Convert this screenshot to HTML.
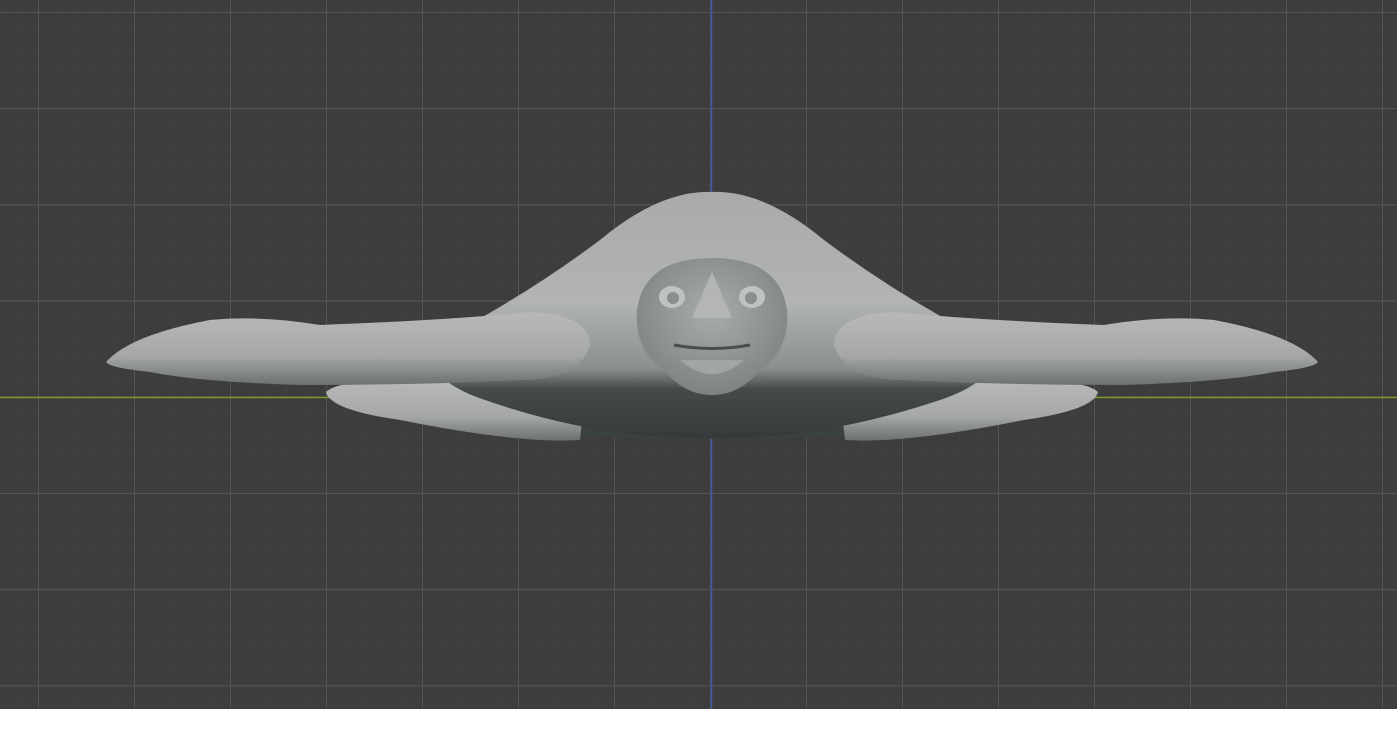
<!DOCTYPE html><html><head><style>html,body{margin:0;padding:0;background:#fff;width:1397px;height:738px;overflow:hidden}</style></head><body>
<svg width="1397" height="738" viewBox="0 0 1397 738" xmlns="http://www.w3.org/2000/svg">
<defs>
<pattern id="minor" x="38" y="12" width="19.2" height="19.2" patternUnits="userSpaceOnUse"><path d="M0 0H19.2M0 0V19.2" stroke="#444" stroke-width="1" fill="none"/></pattern>
<pattern id="major" x="38" y="12" width="96" height="96.2" patternUnits="userSpaceOnUse"><path d="M0 0.5H96M0.5 0V96" stroke="#555" stroke-width="1" fill="none"/></pattern>
<linearGradient id="shell" x1="0" y1="0" x2="0" y2="1"><stop offset="0" stop-color="#a9abab"/><stop offset="0.45" stop-color="#b2b4b4"/><stop offset="0.72" stop-color="#8a8e8e"/><stop offset="0.8" stop-color="#454a4a"/><stop offset="1" stop-color="#353a3a"/></linearGradient>
<linearGradient id="fl" x1="0" y1="0" x2="0" y2="1"><stop offset="0" stop-color="#b8baba"/><stop offset="0.6" stop-color="#a6a8a8"/><stop offset="1" stop-color="#6c7070"/></linearGradient>
<radialGradient id="head" cx="0.5" cy="0.4" r="0.6"><stop offset="0" stop-color="#a9acac"/><stop offset="1" stop-color="#7e8282"/></radialGradient>
</defs>
<rect width="1397" height="709" fill="#3d3d3d"/>
<rect width="1397" height="709" fill="url(#minor)"/>
<rect width="1397" height="709" fill="url(#major)"/>
<line x1="0" y1="397.5" x2="1397" y2="397.5" stroke="#7d9a2b" stroke-width="1.5"/>
<line x1="711.5" y1="0" x2="711.5" y2="709" stroke="#3c5aa6" stroke-width="1.5"/>
<ellipse cx="712" cy="405" rx="290" ry="34" fill="#3b4040"/>
<path d="M326 392 Q340 378 430 380 L585 395 L580 440 Q520 444 400 420 Q330 410 326 392Z" fill="url(#fl)"/>
<path d="M1098 392 Q1084 378 994 380 L840 395 L845 440 Q905 444 1024 420 Q1094 410 1098 392Z" fill="url(#fl)"/>
<path d="M430 345 Q520 300 600 240 Q660 190 712 192 Q764 190 824 240 Q904 300 995 345 Q1000 380 940 400 Q820 440 712 438 Q600 440 485 400 Q425 380 430 345Z" fill="url(#shell)"/>
<path d="M106 362 Q130 335 210 320 Q260 315 320 325 Q450 320 530 312 Q590 315 590 345 Q580 380 520 380 Q420 385 300 385 Q200 382 150 372 Q110 368 106 362Z" fill="url(#fl)"/>
<path d="M1318 362 Q1294 335 1214 320 Q1164 315 1104 325 Q974 320 894 312 Q834 315 834 345 Q844 380 904 380 Q1004 385 1124 385 Q1224 382 1274 372 Q1314 368 1318 362Z" fill="url(#fl)"/>
<path d="M712 258 Q780 258 787 310 Q790 350 760 370 Q740 395 712 395 Q684 395 664 370 Q634 350 637 310 Q644 258 712 258Z" fill="url(#head)"/>
<ellipse cx="672" cy="297" rx="13" ry="11" fill="#c0c2c2"/><ellipse cx="752" cy="297" rx="13" ry="11" fill="#c0c2c2"/>
<ellipse cx="673" cy="298" rx="6" ry="6" fill="#8a8e8e"/><ellipse cx="751" cy="298" rx="6" ry="6" fill="#8a8e8e"/>
<path d="M712 272 L732 318 L692 318Z" fill="#b4b6b6"/>
<path d="M674 345 Q712 352 750 345" stroke="#4a4e4e" stroke-width="3" fill="none"/>
<path d="M680 360 Q712 388 744 360" fill="#a2a5a5"/>
</svg>
</body></html>
